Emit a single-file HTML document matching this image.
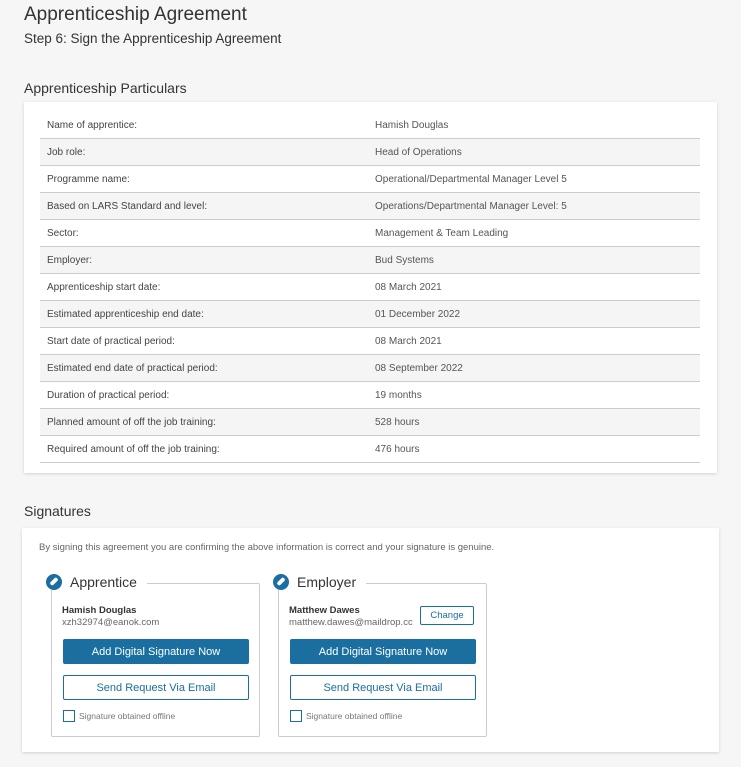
<!DOCTYPE html>
<html><head><style>
body{margin:0;background:#f6f6f6;font-family:"Liberation Sans",sans-serif;color:#333;width:741px;height:767px;overflow:hidden;position:relative}
.a{position:absolute}
h1{position:absolute;left:24px;top:4px;margin:0;font-size:19px;font-weight:normal;color:#333}
.sub{left:24px;top:31px;font-size:13.5px;color:#333}
.sec{font-size:14px;color:#333}
.card{background:#fff;box-shadow:0 1px 3px rgba(0,0,0,.15)}
table{border-collapse:collapse;position:absolute;left:40px;top:112px;width:660px;font-size:10px;color:#444;table-layout:fixed}
td{height:26px;border-bottom:1px solid #ccc;padding:0 0 0 7px}
td.l{width:321px}
tr:nth-child(even) td{background:#f5f5f5}
td.v{color:#555}
.fs{border:1px solid #ccc;border-radius:2px;background:#fff}
.leg{background:#fff;padding:0 10px 0 2px;font-size:14px;color:#333;display:flex;align-items:center}
.ic{width:16px;height:16px;border-radius:50%;background:#1a6fa0;margin-right:8px;display:inline-block;position:relative}
.ic:after{content:"";position:absolute;left:6px;top:3px;width:4px;height:9px;background:#fff;border-radius:2px;transform:rotate(45deg)}
.btn{position:absolute;left:11px;width:186px;height:25px;box-sizing:border-box;border-radius:2px;font-size:11px;display:flex;align-items:center;justify-content:center}
.p{background:#1a6fa0;color:#fff;top:55px}
.s{border:1px solid #1a6fa0;color:#1a6fa0;top:91px;background:#fff}
.nm{left:10px;top:21px;font-size:9.5px;font-weight:bold;color:#333}
.em{left:10px;top:33px;font-size:9.5px;color:#666}
.cb{left:11px;top:126px;font-size:8.5px;color:#777;display:flex;align-items:center}
.cb span{width:10px;height:10px;border:1px solid #1a6fa0;margin-right:4px;display:inline-block}
</style></head><body>
<h1>Apprenticeship Agreement</h1>
<div class="a sub">Step 6: Sign the Apprenticeship Agreement</div>
<div class="a sec" style="left:24px;top:80px">Apprenticeship Particulars</div>
<div class="a card" style="left:24px;top:102px;width:693px;height:371px"></div>
<table>
<tr><td class="l">Name of apprentice:</td><td class="v">Hamish Douglas</td></tr>
<tr><td>Job role:</td><td class="v">Head of Operations</td></tr>
<tr><td>Programme name:</td><td class="v">Operational/Departmental Manager Level 5</td></tr>
<tr><td>Based on LARS Standard and level:</td><td class="v">Operations/Departmental Manager Level: 5</td></tr>
<tr><td>Sector:</td><td class="v">Management &amp; Team Leading</td></tr>
<tr><td>Employer:</td><td class="v">Bud Systems</td></tr>
<tr><td>Apprenticeship start date:</td><td class="v">08 March 2021</td></tr>
<tr><td>Estimated apprenticeship end date:</td><td class="v">01 December 2022</td></tr>
<tr><td>Start date of practical period:</td><td class="v">08 March 2021</td></tr>
<tr><td>Estimated end date of practical period:</td><td class="v">08 September 2022</td></tr>
<tr><td>Duration of practical period:</td><td class="v">19 months</td></tr>
<tr><td>Planned amount of off the job training:</td><td class="v">528 hours</td></tr>
<tr><td>Required amount of off the job training:</td><td class="v">476 hours</td></tr>
</table>
<div class="a sec" style="left:24px;top:503px">Signatures</div>
<div class="a card" style="left:22px;top:528px;width:697px;height:224px"></div>
<div class="a" style="left:39px;top:542px;font-size:9.5px;color:#666">By signing this agreement you are confirming the above information is correct and your signature is genuine.</div>

<div class="a fs" style="left:51px;top:583px;width:207px;height:152px">
<div class="a nm">Hamish Douglas</div><div class="a em">xzh32974@eanok.com</div>
<div class="btn p">Add Digital Signature Now</div>
<div class="btn s">Send Request Via Email</div>
<div class="a cb"><span></span>Signature obtained offline</div>
</div>
<div class="a leg" style="left:44px;top:574px"><i class="ic"></i>Apprentice</div>

<div class="a fs" style="left:278px;top:583px;width:207px;height:152px">
<div class="a nm">Matthew Dawes</div><div class="a em">matthew.dawes@maildrop.cc</div>
<div class="a" style="left:141px;top:22px;width:54px;height:19px;box-sizing:border-box;border:1px solid #1a6fa0;border-radius:2px;font-size:9.5px;color:#1a6fa0;display:flex;align-items:center;justify-content:center">Change</div>
<div class="btn p">Add Digital Signature Now</div>
<div class="btn s">Send Request Via Email</div>
<div class="a cb"><span></span>Signature obtained offline</div>
</div>
<div class="a leg" style="left:271px;top:574px"><i class="ic"></i>Employer</div>
</body></html>
